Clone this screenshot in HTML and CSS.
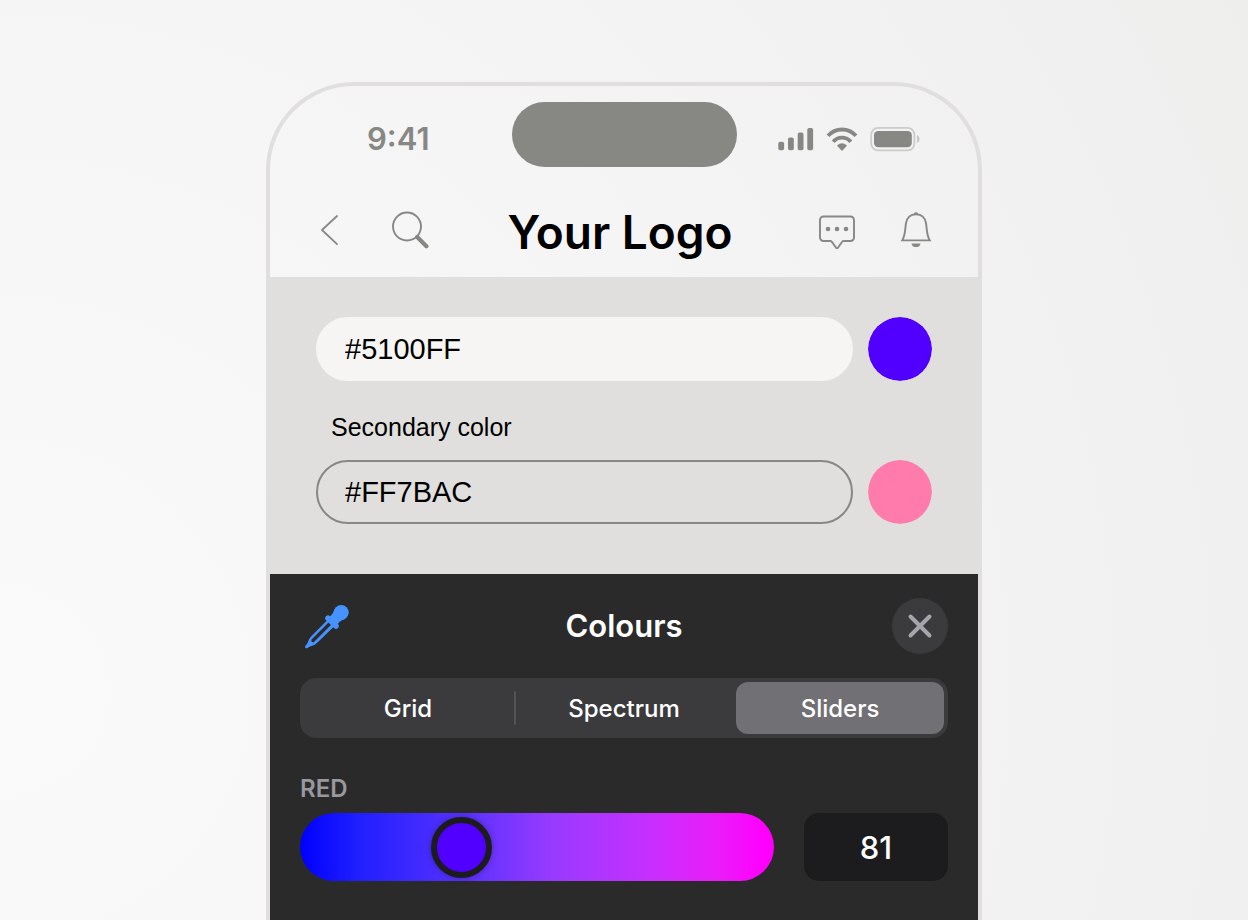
FILE: index.html
```html
<!DOCTYPE html>
<html lang="en">
<head>
<meta charset="utf-8">
<meta name="viewport" content="width=device-width, initial-scale=1">
<title>Your Logo – Colours</title>
<link rel="stylesheet" href="styles.css">
</head>
<body>
<main class="phone">
  <header class="top">
    <div class="status">
      <span class="status-time">9:41</span>
      <span class="island"></span>
      <div class="status-icons">
        <svg width="36" height="24" viewBox="0 0 36 24" fill="currentColor" aria-hidden="true">
          <rect x="0.3" y="14.8" width="5.8" height="8.4" rx="1.8"/>
          <rect x="10" y="10.4" width="5.8" height="12.8" rx="1.8"/>
          <rect x="19.7" y="5.6" width="5.8" height="17.6" rx="1.8"/>
          <rect x="29.3" y="1" width="5.8" height="22.2" rx="1.8"/>
        </svg>
        <svg width="32" height="24" viewBox="0 0 32 24" aria-hidden="true">
          <g fill="none" stroke="currentColor" stroke-width="3.9">
            <path d="M2 8.800a18.600 18.600 0 0 1 28 0"/>
            <path d="M7.200 14.700a11.500 11.500 0 0 1 17.600 0"/>
          </g>
          <path d="M15.500 23.400l-4.200-4.400q-.4-.5 0-.8a7.400 7.400 0 0 1 9.400 0q.4.300 0 .8l-4.200 4.400q-.5.500-1 0z" fill="currentColor"/>
        </svg>
        <svg width="50" height="26" viewBox="0 0 50 26" fill="currentColor" aria-hidden="true">
          <rect x="1.2" y="1.900" width="43.2" height="22.4" rx="6.8" fill="none" stroke="currentColor" stroke-width="1.8" opacity=".36"/>
          <rect x="4" y="5" width="37.8" height="16.2" rx="4.2"/>
          <path d="M47 9v8c1.600-.7 2.500-2.200 2.500-4S48.600 9.700 47 9z" opacity=".4"/>
        </svg>
      </div>
    </div>
    <nav class="nav">
      <div class="nav-side">
        <button class="icon-button" type="button" aria-label="Back">
          <svg width="20" height="38" viewBox="0 0 20 38" fill="none" stroke="currentColor" stroke-width="1.8" stroke-linecap="round" stroke-linejoin="round"><path d="M17 5L2 19l15 14.200"/></svg>
        </button>
        <button class="icon-button" type="button" aria-label="Search">
          <svg width="38" height="38" viewBox="0 0 38 38" fill="none" stroke="currentColor" stroke-linecap="round"><circle cx="15" cy="15.500" r="14" stroke-width="1.900"/><path d="M25.200 26l9.200 9.300" stroke-width="4.200"/></svg>
        </button>
      </div>
      <span class="logo">Your Logo</span>
      <div class="nav-side nav-side-end">
        <button class="icon-button" type="button" aria-label="Messages">
          <svg width="38" height="38" viewBox="0 0 38 38" fill="none" stroke="currentColor" stroke-width="1.900" stroke-linejoin="round"><path d="M5.500 5.500h27a3.500 3.500 0 0 1 3.500 3.500v17.500a3.500 3.500 0 0 1-3.500 3.500h-6.700q-1 0-1.600.8l-4.300 6q-.9 1.200-1.800 0l-4.300-6q-.6-.8-1.600-.8H5.500A3.500 3.500 0 0 1 2 26.500V9a3.500 3.500 0 0 1 3.500-3.500z"/><g fill="currentColor" stroke="none"><circle cx="10" cy="18" r="2.300"/><circle cx="19" cy="18" r="2.300"/><circle cx="28" cy="18" r="2.300"/></g></svg>
        </button>
        <button class="icon-button" type="button" aria-label="Notifications">
          <svg width="32" height="38" viewBox="0 0 32 38"><path d="M2.200 29.400C5.500 24 5 19 5.900 12.500 6.900 6.500 10.800 3.400 16 3.400s9.100 3.100 10.100 9.100c.9 6.500.4 11.500 3.700 16.900z" fill="none" stroke="currentColor" stroke-width="1.900"/><path d="M13.300 3.400a2.800 2.900 0 0 1 5.400 0zM11.400 32.400h9.200a4.700 4.600 0 0 1-9.200 0z" fill="currentColor"/></svg>
        </button>
      </div>
    </nav>
  </header>

  <section class="fields">
    <div class="field-row">
      <input class="hex hex-filled" type="text" value="#5100FF" aria-label="Primary color">
      <input class="swatch" type="color" value="#5100ff" aria-label="Pick primary color">
    </div>
    <label class="field-label" for="secondary">Secondary color</label>
    <div class="field-row">
      <input class="hex" id="secondary" type="text" value="#FF7BAC">
      <input class="swatch" type="color" value="#ff7bac" aria-label="Pick secondary color">
    </div>
  </section>

  <section class="sheet">
    <div class="sheet-head">
      <button class="icon-button dropper" type="button" aria-label="Pick from screen">
        <svg width="50" height="48" viewBox="0 0 50 48" fill="currentColor">
          <path d="M27.200 18.200L11.500 34Q9 36.500 8.200 39.500 7.500 41.500 5.600 43.600 4.700 44.800 5.300 45.700 6.300 46.700 7.600 45.900 9.500 44.600 11.500 44 14.800 43.200 17.200 40.800L34 24.500z"/>
          <path d="M30 21.500L13 38.500" fill="none" stroke="#2a2a2a" stroke-width="3.400" stroke-linecap="round"/>
          <path d="M28 16.200L36 24" fill="none" stroke="currentColor" stroke-width="5.600" stroke-linecap="round"/>
          <path d="M34.600 7.500Q33 12 29 15.500L36.800 23.200Q39.500 18.800 44.300 17.200z"/>
          <circle cx="41.200" cy="10.500" r="7.500"/>
        </svg>
      </button>
      <h1 class="sheet-title">Colours</h1>
      <button class="close" type="button" aria-label="Close">
        <svg width="28" height="28" viewBox="0 0 28 28" fill="none" stroke="currentColor" stroke-width="4" stroke-linecap="round"><path d="M4.500 4.500l19 19m0-19l-19 19"/></svg>
      </button>
    </div>

    <div class="tabs" role="tablist">
      <button class="tab" type="button" role="tab" aria-selected="false">Grid</button>
      <button class="tab tab-divided" type="button" role="tab" aria-selected="false">Spectrum</button>
      <button class="tab tab-active" type="button" role="tab" aria-selected="true">Sliders</button>
    </div>

    <div class="channel">
      <label class="channel-label" for="red">RED</label>
      <div class="channel-row">
        <input class="slider" id="red" type="range" min="0" max="255" value="81">
        <input class="channel-value" type="text" inputmode="numeric" value="81" aria-label="Red value">
      </div>
    </div>
  </section>
</main>
</body>
</html>
```
FILE: styles.css
```css
*, *::before, *::after {
  box-sizing: border-box;
}

body {
  margin: 0;
  min-height: 100vh;
  display: flex;
  justify-content: center;
  padding-top: 82px;
  background: radial-gradient(circle at 0% 75%, #fafafa 0%, #f5f5f5 50%, #f1f1f1 80%, #eeeeed 100%);
  font-family: Inter, "Liberation Sans", sans-serif;
}

button, input {
  font: inherit;
  color: inherit;
  margin: 0;
}

svg {
  display: block;
}

.phone {
  width: 100%;
  max-width: 716px;
  display: flex;
  flex-direction: column;
  border: 4px solid #e0dfdd;
  border-bottom: 0;
  border-radius: 88px 88px 0 0;
}

.top {
  padding-top: 16px;
  color: #878784;
}

.status,
.nav {
  display: grid;
  grid-template-columns: 1fr auto 1fr;
  align-items: center;
}

.status-time {
  padding: 8px 0 0 97px;
  font-size: 31px;
  line-height: 36px;
  font-weight: 600;
}

.island {
  width: 225px;
  height: 65px;
  border-radius: 33px;
  background: #878784;
}

.status-icons {
  display: flex;
  align-items: center;
  justify-content: flex-end;
  gap: 12px;
  padding: 9px 58px 0 0;
}

.nav {
  height: 110px;
  padding: 16px 46px 0;
}

.nav-side {
  display: flex;
  align-items: center;
  gap: 52px;
  padding-left: 4px;
}

.nav-side-end {
  justify-content: flex-end;
  gap: 44px;
}

.icon-button {
  padding: 0;
  border: 0;
  background: none;
}

.logo {
  padding: 4px 8px 0 0;
  color: #000;
  font-size: 46px;
  line-height: 56px;
  font-weight: 600;
}

.fields {
  padding: 40px 46px 50px;
  background: #e0dfdd;
  color: #000;
  font-family: "Liberation Sans", Arial, sans-serif;
}

.field-row {
  display: flex;
  align-items: center;
  gap: 15px;
}

.hex {
  flex: 1;
  min-width: 0;
  height: 64px;
  padding: 0 27px;
  border: 2px solid #878784;
  border-radius: 32px;
  background: transparent;
  font-size: 29px;
}

.hex-filled {
  border-color: #f6f5f3;
  background: #f6f5f3;
}

.swatch {
  appearance: none;
  width: 64px;
  height: 64px;
  padding: 0;
  border: 0;
  border-radius: 50%;
  background: none;
  overflow: hidden;
}

.swatch::-webkit-color-swatch-wrapper {
  padding: 0;
}

.swatch::-webkit-color-swatch {
  border: 0;
  border-radius: 50%;
}

.field-label {
  display: block;
  padding: 30px 15px 17px;
  font-size: 25px;
  line-height: 32px;
}

.sheet {
  flex: 1;
  padding: 24px 30px 38px;
  background: #2a2a2a;
  color: #fff;
}

.sheet-head {
  display: grid;
  grid-template-columns: 56px 1fr 56px;
  align-items: center;
}

.dropper {
  color: #4693ff;
}

.sheet-title {
  margin: 0;
  text-align: center;
  font-size: 31px;
  line-height: 40px;
  font-weight: 600;
}

.close {
  display: grid;
  place-items: center;
  width: 56px;
  height: 56px;
  padding: 0;
  border: 0;
  border-radius: 50%;
  background: #3b3b3e;
  color: #a5a5ad;
}

.tabs {
  display: grid;
  grid-template-columns: repeat(3, 1fr);
  gap: 8px;
  margin-top: 24px;
  padding: 4px;
  border-radius: 16px;
  background: #3b3b3e;
}

.tab {
  position: relative;
  height: 52px;
  padding: 0;
  border: 0;
  border-radius: 12px;
  background: none;
  font-size: 24px;
  font-weight: 500;
}

.tab-active {
  background: #717075;
}

.tab-divided::before {
  content: "";
  position: absolute;
  left: -6px;
  top: 9px;
  bottom: 9px;
  width: 2px;
  border-radius: 1px;
  background: #535358;
}

.channel {
  margin-top: 35px;
}

.channel-label {
  display: block;
  color: #98989f;
  font-size: 24px;
  line-height: 32px;
  font-weight: 600;
}

.channel-row {
  display: flex;
  gap: 30px;
  margin-top: 8px;
}

.slider {
  appearance: none;
  flex: 1;
  min-width: 0;
  height: 68px;
  border-radius: 34px;
  background: linear-gradient(90deg, #0000ff 0%, #1f1fff 12%, #5a32ff 35%, #983aff 53%, #c430ff 73%, #ea1cf8 88%, #ff00ff 98%);
}

.slider::-webkit-slider-thumb {
  appearance: none;
  width: 61px;
  height: 61px;
  border: 6px solid #1c1c1e;
  border-radius: 50%;
  background: #5100ff;
  box-shadow: 0 0 6px rgba(0, 0, 0, 0.3);
}

.channel-value {
  width: 144px;
  height: 68px;
  padding: 0;
  border: 0;
  border-radius: 15px;
  background: #1c1c1e;
  text-align: center;
  font-size: 31px;
  font-weight: 500;
}
```
